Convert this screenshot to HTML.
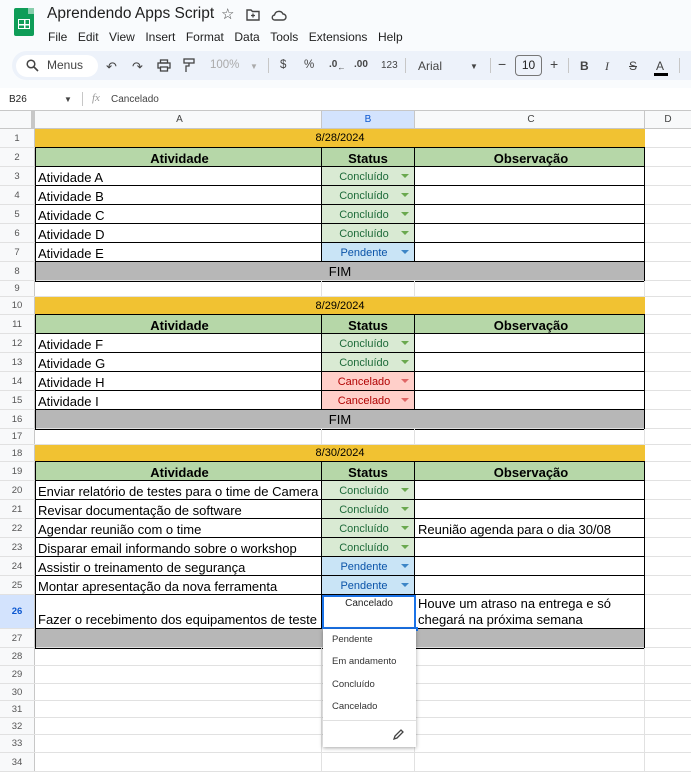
<!DOCTYPE html>
<html><head><meta charset="utf-8"><style>
*{box-sizing:border-box;margin:0;padding:0}
body{width:691px;height:772px;overflow:hidden;background:#fff;font-family:"Liberation Sans",Arial,sans-serif;position:relative;color:#000}
.a{position:absolute}
.top{left:0;top:0;width:691px;height:88px;background:#f9fbfd}
.menu span{margin-right:10.5px;font-size:12px;color:#1f1f1f}
.tb{left:12px;top:51px;width:700px;height:29px;background:#edf2fa;border-radius:15px}
.ti{position:absolute;top:59px;font-size:11.5px;color:#444}
.fb{left:0;top:88px;width:691px;height:23px;background:#fff;border-bottom:1px solid #c7c7c7}
.r{position:absolute;left:0;width:691px;border-bottom:1px solid #e1e1e1}
.rn{position:absolute;left:0;top:0;width:35px;height:100%;background:#f8f9fa;border-right:1px solid #c7c7c7;font-size:9.5px;color:#555;display:flex;align-items:center;justify-content:center}
.c{position:absolute;top:0;height:100%;display:flex;align-items:center;font-size:13px;white-space:nowrap;overflow:hidden}
.A{left:35px;width:287px;border-right:1px solid #e1e1e1;padding-left:3px}
.B{left:322px;width:93px;border-right:1px solid #e1e1e1;justify-content:center}
.C{left:415px;width:230px;border-right:1px solid #e1e1e1;padding-left:3px}
.D{left:645px;width:46px}
.k{border-right:1px solid #000!important;border-bottom:1px solid #000;height:calc(100% + 1px);padding-top:2px}
.tbl{position:absolute;left:35px;width:610px;border:1px solid #000;pointer-events:none}
.chip{font-size:11px;padding-right:8px}
.con{background:#d9ead3;color:#1e6b3a}
.pen{background:#c9e4f6;color:#0a53a8}
.can{background:#ffcfc9;color:#b10202}
.chip:after{content:"";position:absolute;right:5px;top:50%;margin-top:-2px;border-left:4px solid transparent;border-right:4px solid transparent;border-top:4px solid currentColor}
.con:after{border-top-color:#6aa84f}
.pen:after{border-top-color:#3d85c6}
.can:after{border-top-color:#e06666}
.yel{background:#f1c232}
.grn{background:#b6d7a8}
.gry{background:#b7b7b7}
</style></head><body>
<div class="a top"></div>
<div class="a" style="left:14px;top:8px;width:20px;height:28px;background:#0f9d58;border-radius:2px"></div>
<div class="a" style="left:28px;top:8px;width:6px;height:6px;background:#87ceac"></div>
<div class="a" style="left:18px;top:19px;width:12px;height:10px;border:1.5px solid #fff;background:linear-gradient(#fff,#fff) 4.5px 0/1.5px 100% no-repeat,linear-gradient(#fff,#fff) 0 3.5px/100% 1.5px no-repeat"></div>
<div class="a" style="left:47px;top:5px;font-size:15.5px;color:#1f1f1f">Aprendendo Apps Script</div>
<div class="a" style="left:221px;top:5px;font-size:15px;color:#444">☆</div>
<svg class="a" style="left:246px;top:9px" width="14" height="12" viewBox="0 0 14 12"><path d="M1 1h4l1.5 1.5H13V11H1z" fill="none" stroke="#444" stroke-width="1.4"/><path d="M7 4.5v4M5 6.5h4" stroke="#444" stroke-width="1.3"/></svg>
<svg class="a" style="left:271px;top:9px" width="16" height="12" viewBox="0 0 16 12"><path d="M4 11h8a3 3 0 0 0 0-6 4.5 4.5 0 0 0-8.5 1A2.5 2.5 0 0 0 4 11z" fill="none" stroke="#444" stroke-width="1.4"/></svg>
<div class="a menu" style="left:48px;top:28px"><span>File</span><span>Edit</span><span>View</span><span>Insert</span><span>Format</span><span>Data</span><span>Tools</span><span>Extensions</span><span>Help</span></div>
<div class="a tb"></div>
<div class="a" style="left:16px;top:55px;width:82px;height:22px;background:#fff;border-radius:11px"></div>
<svg class="a" style="left:26px;top:59px" width="13" height="13" viewBox="0 0 13 13"><circle cx="5" cy="5" r="3.8" fill="none" stroke="#444" stroke-width="1.5"/><path d="M8 8l4 4" stroke="#444" stroke-width="1.6"/></svg>
<div class="ti" style="left:47px;top:58px;font-size:12px">Menus</div>
<div class="ti" style="left:106px;font-size:13px">↶</div>
<div class="ti" style="left:132px;font-size:13px">↷</div>
<svg class="a" style="left:157px;top:59px" width="14" height="13" viewBox="0 0 14 13"><rect x="3.5" y="1" width="7" height="3" fill="none" stroke="#444" stroke-width="1.3"/><rect x="1" y="4" width="12" height="5" fill="none" stroke="#444" stroke-width="1.3"/><rect x="3.5" y="8" width="7" height="4" fill="#edf2fa" stroke="#444" stroke-width="1.3"/></svg>
<svg class="a" style="left:183px;top:58px" width="12" height="15" viewBox="0 0 12 15"><rect x="1" y="1" width="10" height="4" fill="none" stroke="#444" stroke-width="1.3"/><path d="M6 5v3H3v6" fill="none" stroke="#444" stroke-width="1.3"/></svg>
<div class="ti" style="left:210px;color:#aaa">100%</div>
<div class="ti" style="left:250px;color:#aaa;font-size:8px;top:62px">▼</div>
<div class="a" style="left:268px;top:58px;width:1px;height:15px;background:#c7c7c7"></div>
<div class="ti" style="left:280px">$</div>
<div class="ti" style="left:304px">%</div>
<div class="ti" style="left:329px;font-weight:bold;font-size:10px">.0<sub>←</sub></div>
<div class="ti" style="left:354px;font-weight:bold;font-size:10px">.00</div>
<div class="ti" style="left:381px;font-size:10px;top:60px">123</div>
<div class="a" style="left:405px;top:58px;width:1px;height:15px;background:#c7c7c7"></div>
<div class="ti" style="left:418px;font-size:12px">Arial</div>
<div class="ti" style="left:470px;font-size:8px;top:62px">▼</div>
<div class="a" style="left:490px;top:58px;width:1px;height:15px;background:#c7c7c7"></div>
<div class="ti" style="left:498px;font-size:14px;top:56px">−</div>
<div class="a" style="left:515px;top:55px;width:27px;height:21px;border:1px solid #777;border-radius:4px;font-size:12px;text-align:center;line-height:19px;color:#222">10</div>
<div class="ti" style="left:550px;font-size:14px;top:56px">+</div>
<div class="a" style="left:568px;top:58px;width:1px;height:15px;background:#c7c7c7"></div>
<div class="ti" style="left:580px;font-weight:bold;font-size:12px">B</div>
<div class="ti" style="left:605px;font-style:italic;font-size:12px;font-family:'Liberation Serif',serif">I</div>
<div class="ti" style="left:629px;text-decoration:line-through;font-size:12px">S</div>
<div class="ti" style="left:656px;font-size:12px">A</div>
<div class="a" style="left:654px;top:73px;width:14px;height:3px;background:#000"></div>
<div class="a" style="left:679px;top:58px;width:1px;height:15px;background:#c7c7c7"></div>
<div class="a fb"></div>
<div class="a" style="left:9px;top:94px;font-size:10px;color:#222">B26</div>
<div class="a" style="left:64px;top:95px;font-size:8px;color:#444">▼</div>
<div class="a" style="left:82px;top:92px;width:1px;height:14px;background:#c7c7c7"></div>
<div class="a" style="left:92px;top:92px;font-size:11px;color:#999;font-style:italic;font-family:'Liberation Serif',serif">fx</div>
<div class="a" style="left:111px;top:94px;font-size:10px;color:#444">Cancelado</div>
<!-- column headers -->
<div class="r" style="top:111px;height:18px;border-bottom:1px solid #c7c7c7;background:#f8f9fa">
<div class="rn" style="background:#f8f9fa;border-right:4px solid #c7c7c7"></div>
<div class="c A" style="justify-content:center;font-size:10px;color:#444;border-right-color:#c7c7c7">A</div>
<div class="c B" style="font-size:10px;color:#0b57d0;background:#d3e3fd;border-right-color:#c7c7c7">B</div>
<div class="c C" style="justify-content:center;font-size:10px;color:#444;border-right-color:#c7c7c7">C</div>
<div class="c D" style="justify-content:center;font-size:10px;color:#444">D</div>
</div>

<!-- Block 1 -->
<div class="r" style="top:129px;height:19px"><div class="rn">1</div><div class="c yel" style="left:35px;width:610px;justify-content:center;font-size:11px">8/28/2024</div></div>
<div class="r" style="top:148px;height:19px"><div class="rn">2</div><div class="c A grn k" style="justify-content:center;font-weight:bold">Atividade</div><div class="c B grn k" style="font-weight:bold">Status</div><div class="c C grn k" style="justify-content:center;font-weight:bold">Observação</div></div>
<div class="r" style="top:167px;height:19px"><div class="rn">3</div><div class="c A k">Atividade A</div><div class="c B chip con k">Concluído</div><div class="c C k"></div></div>
<div class="r" style="top:186px;height:19px"><div class="rn">4</div><div class="c A k">Atividade B</div><div class="c B chip con k">Concluído</div><div class="c C k"></div></div>
<div class="r" style="top:205px;height:19px"><div class="rn">5</div><div class="c A k">Atividade C</div><div class="c B chip con k">Concluído</div><div class="c C k"></div></div>
<div class="r" style="top:224px;height:19px"><div class="rn">6</div><div class="c A k">Atividade D</div><div class="c B chip con k">Concluído</div><div class="c C k"></div></div>
<div class="r" style="top:243px;height:19px"><div class="rn">7</div><div class="c A k">Atividade E</div><div class="c B chip pen k">Pendente</div><div class="c C k"></div></div>
<div class="r" style="top:262px;height:19px"><div class="rn">8</div><div class="c gry" style="left:35px;width:610px;justify-content:center">FIM</div></div>
<div class="tbl" style="top:147px;height:135px"></div>

<div class="r" style="top:281px;height:16px"><div class="rn">9</div><div class="c A"></div><div class="c B"></div><div class="c C"></div></div>

<!-- Block 2 -->
<div class="r" style="top:297px;height:18px"><div class="rn">10</div><div class="c yel" style="left:35px;width:610px;justify-content:center;font-size:11px">8/29/2024</div></div>
<div class="r" style="top:315px;height:19px"><div class="rn">11</div><div class="c A grn k" style="justify-content:center;font-weight:bold">Atividade</div><div class="c B grn k" style="font-weight:bold">Status</div><div class="c C grn k" style="justify-content:center;font-weight:bold">Observação</div></div>
<div class="r" style="top:334px;height:19px"><div class="rn">12</div><div class="c A k">Atividade F</div><div class="c B chip con k">Concluído</div><div class="c C k"></div></div>
<div class="r" style="top:353px;height:19px"><div class="rn">13</div><div class="c A k">Atividade G</div><div class="c B chip con k">Concluído</div><div class="c C k"></div></div>
<div class="r" style="top:372px;height:19px"><div class="rn">14</div><div class="c A k">Atividade H</div><div class="c B chip can k">Cancelado</div><div class="c C k"></div></div>
<div class="r" style="top:391px;height:19px"><div class="rn">15</div><div class="c A k">Atividade I</div><div class="c B chip can k">Cancelado</div><div class="c C k"></div></div>
<div class="r" style="top:410px;height:19px"><div class="rn">16</div><div class="c gry" style="left:35px;width:610px;justify-content:center">FIM</div></div>
<div class="tbl" style="top:314px;height:116px"></div>

<div class="r" style="top:429px;height:16px"><div class="rn">17</div><div class="c A"></div><div class="c B"></div><div class="c C"></div></div>

<!-- Block 3 -->
<div class="r" style="top:445px;height:17px"><div class="rn">18</div><div class="c yel" style="left:35px;width:610px;justify-content:center;font-size:11px">8/30/2024</div></div>
<div class="r" style="top:462px;height:19px"><div class="rn">19</div><div class="c A grn k" style="justify-content:center;font-weight:bold">Atividade</div><div class="c B grn k" style="font-weight:bold">Status</div><div class="c C grn k" style="justify-content:center;font-weight:bold">Observação</div></div>
<div class="r" style="top:481px;height:19px"><div class="rn">20</div><div class="c A k">Enviar relatório de testes para o time de Camera</div><div class="c B chip con k">Concluído</div><div class="c C k"></div></div>
<div class="r" style="top:500px;height:19px"><div class="rn">21</div><div class="c A k">Revisar documentação de software</div><div class="c B chip con k">Concluído</div><div class="c C k"></div></div>
<div class="r" style="top:519px;height:19px"><div class="rn">22</div><div class="c A k">Agendar reunião com o time</div><div class="c B chip con k">Concluído</div><div class="c C k">Reunião agenda para o dia 30/08</div></div>
<div class="r" style="top:538px;height:19px"><div class="rn">23</div><div class="c A k">Disparar email informando sobre o workshop</div><div class="c B chip con k">Concluído</div><div class="c C k"></div></div>
<div class="r" style="top:557px;height:19px"><div class="rn">24</div><div class="c A k">Assistir o treinamento de segurança</div><div class="c B chip pen k">Pendente</div><div class="c C k"></div></div>
<div class="r" style="top:576px;height:19px"><div class="rn">25</div><div class="c A k">Montar apresentação da nova ferramenta</div><div class="c B chip pen k">Pendente</div><div class="c C k"></div></div>
<div class="r" style="top:595px;height:34px"><div class="rn" style="background:#d3e3fd;color:#0b57d0;font-weight:bold">26</div><div class="c A k" style="align-items:flex-end;padding-bottom:1px">Fazer o recebimento dos equipamentos de teste</div><div class="c B k"></div><div class="c C k" style="white-space:normal;line-height:16px;align-items:flex-start;padding-top:1px">Houve um atraso na entrega e só chegará na próxima semana</div></div>
<div class="r" style="top:629px;height:19px"><div class="rn">27</div><div class="c gry" style="left:35px;width:610px"></div></div>
<div class="tbl" style="top:461px;height:188px"></div>

<div class="r" style="top:648px;height:18px"><div class="rn">28</div><div class="c A"></div><div class="c B"></div><div class="c C"></div></div>
<div class="r" style="top:666px;height:18px"><div class="rn">29</div><div class="c A"></div><div class="c B"></div><div class="c C"></div></div>
<div class="r" style="top:684px;height:17px"><div class="rn">30</div><div class="c A"></div><div class="c B"></div><div class="c C"></div></div>
<div class="r" style="top:701px;height:17px"><div class="rn">31</div><div class="c A"></div><div class="c B"></div><div class="c C"></div></div>
<div class="r" style="top:718px;height:17px"><div class="rn">32</div><div class="c A"></div><div class="c B"></div><div class="c C"></div></div>
<div class="r" style="top:735px;height:18px"><div class="rn">33</div><div class="c A"></div><div class="c B"></div><div class="c C"></div></div>
<div class="r" style="top:753px;height:19px"><div class="rn">34</div><div class="c A"></div><div class="c B"></div><div class="c C"></div></div>

<!-- active cell editor -->
<div class="a" style="left:322px;top:595px;width:94px;height:34px;background:#fff;border:2px solid #1a73e8;font-size:10px;text-align:center;padding-top:1px;color:#222">Cancelado</div>
<div class="a" style="left:414px;top:627px;width:4px;height:4px;background:#1a73e8"></div>
<!-- dropdown -->
<div class="a" style="left:323px;top:629px;width:93px;height:118px;background:#fff;box-shadow:0 1px 4px rgba(0,0,0,.35);font-size:9.5px;color:#333">
<div class="a" style="left:9px;top:5px">Pendente</div>
<div class="a" style="left:9px;top:27px">Em andamento</div>
<div class="a" style="left:9px;top:50px">Concluído</div>
<div class="a" style="left:9px;top:72px">Cancelado</div>
<div class="a" style="left:0;top:91px;width:93px;height:1px;background:#e0e0e0"></div>
<svg class="a" style="left:70px;top:99px" width="12" height="12" viewBox="0 0 12 12"><path d="M1 11l1-3 6-6 2 2-6 6z" fill="none" stroke="#444" stroke-width="1.3"/></svg>
</div>
</body></html>
